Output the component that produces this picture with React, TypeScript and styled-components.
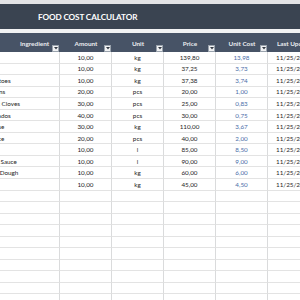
import React from "react";
import styled, { createGlobalStyle } from "styled-components";

const GlobalStyle = createGlobalStyle`
  html, body {
    margin: 0;
    padding: 0;
    width: 300px;
    height: 300px;
    overflow: hidden;
    background: #ffffff;
    font-family: Lato, "Open Sans", "Liberation Sans", sans-serif;
  }
`;

const Page = styled.div`
  width: 300px;
  height: 300px;
  overflow: hidden;
  display: flex;
  flex-direction: column;
  background: #ffffff;
`;

const TopStrip = styled.div`
  height: 4px;
  flex: none;
  background: #e3e4e6;
`;

const TitleBar = styled.div`
  height: 25px;
  flex: none;
  display: flex;
  align-items: center;
  padding-left: 38px;
  background: #3a4451;
  color: #ffffff;
  font-weight: 700;
  font-size: 8.2px;
  letter-spacing: -0.12px;
`;

const Gap = styled.div`
  height: 4px;
  flex: none;
  background: #f1f2f3;
`;

const Sheet = styled.div`
  margin-left: -40px;
  display: flex;
  flex-direction: column;
`;

const COLS = "100px 52px 52px 52px 52px 52px";

const HeaderRow = styled.div`
  display: grid;
  grid-template-columns: ${COLS};
  height: 19px;
  background: #475366;
`;

const HeaderCell = styled.div<{ $align?: "left" | "center" }>`
  position: relative;
  display: flex;
  align-items: center;
  justify-content: ${(p) => (p.$align === "left" ? "flex-start" : "center")};
  padding-left: ${(p) => (p.$align === "left" ? "60px" : "0")};
  padding-top: 2px;
  box-sizing: border-box;
  color: #e9ecf0;
  font-weight: 700;
  font-size: 6.4px;
  white-space: nowrap;
  overflow: visible;
`;

const FilterButton = styled.span`
  position: absolute;
  right: 1px;
  bottom: 0;
  width: 7px;
  height: 7px;
  box-sizing: border-box;
  background: #f1f2f4;
  border: 1px solid #9aa3ad;
  display: flex;
  align-items: center;
  justify-content: center;
`;

const Row = styled.div`
  display: grid;
  grid-template-columns: ${COLS};
  height: 11.55px;
`;

const Cell = styled.div<{ $align?: "left" | "center"; $blue?: boolean }>`
  display: flex;
  align-items: center;
  justify-content: ${(p) => (p.$align === "left" ? "flex-start" : "center")};
  padding-left: ${(p) => (p.$align === "left" ? "24px" : "0")};
  box-sizing: border-box;
  border-right: 1px solid #dadbdc;
  border-bottom: 1px solid #e3e3e3;
  font-size: 6.3px;
  color: ${(p) => (p.$blue ? "#4a6ea8" : "#1e1e1e")};
  white-space: nowrap;
  overflow: hidden;
`;

const Arrow = () => (
  <svg width="4" height="3" viewBox="0 0 4 3">
    <path d="M0 0 L4 0 L2 2.6 Z" fill="#333a44" />
  </svg>
);

const headers = ["Ingredient", "Amount", "Unit", "Price", "Unit Cost", "Last Update"];

const data: [string, string, string, string, string][] = [
  ["Beef", "10,00", "kg", "139,80", "13,98"],
  ["Pork", "10,00", "kg", "37,25", "3,73"],
  ["Tomatoes", "10,00", "kg", "37,38", "3,74"],
  ["Lemons", "20,00", "pcs", "20,00", "1,00"],
  ["Garlic Cloves", "30,00", "pcs", "25,00", "0,83"],
  ["Avocados", "40,00", "pcs", "30,00", "0,75"],
  ["Cheese", "30,00", "kg", "110,00", "3,67"],
  ["Lettuce", "20,00", "pcs", "40,00", "2,00"],
  ["Milk", "10,00", "l", "85,00", "8,50"],
  ["Pasta Sauce", "10,00", "l", "90,00", "9,00"],
  ["Pizza Dough", "10,00", "kg", "60,00", "6,00"],
  ["Flour", "10,00", "kg", "45,00", "4,50"],
];

const EMPTY_ROWS = 11;

export default function App() {
  return (
    <Page>
      <GlobalStyle />
      <TopStrip />
      <TitleBar>FOOD COST CALCULATOR</TitleBar>
      <Gap />
      <Sheet>
        <HeaderRow>
          {headers.map((h, i) => (
            <HeaderCell key={h} $align={i === 0 ? "left" : "center"}>
              {h}
              {i < 5 && (
                <FilterButton>
                  <Arrow />
                </FilterButton>
              )}
            </HeaderCell>
          ))}
        </HeaderRow>
        {data.map((r) => (
          <Row key={r[0]}>
            <Cell $align="left">{r[0]}</Cell>
            <Cell>{r[1]}</Cell>
            <Cell>{r[2]}</Cell>
            <Cell>{r[3]}</Cell>
            <Cell $blue>{r[4]}</Cell>
            <Cell>11/25/2024</Cell>
          </Row>
        ))}
        {Array.from({ length: EMPTY_ROWS }).map((_, i) => (
          <Row key={"e" + i}>
            <Cell $align="left" />
            <Cell />
            <Cell />
            <Cell />
            <Cell />
            <Cell />
          </Row>
        ))}
      </Sheet>
    </Page>
  );
}
